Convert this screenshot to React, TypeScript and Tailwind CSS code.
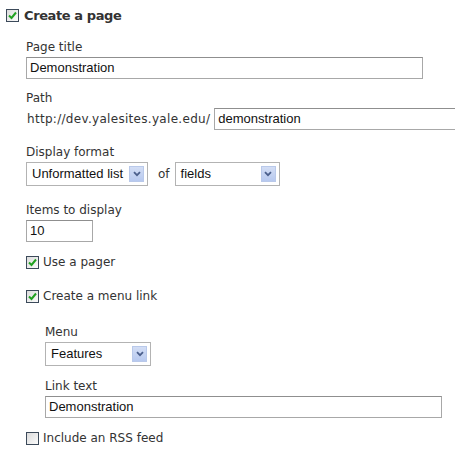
import React from 'react';

const labelFont = { fontFamily: '"DejaVu Sans", Verdana, sans-serif' };

function Checkbox({ checked }: { checked: boolean }) {
  return (
    <span className="inline-flex h-[13px] w-[13px] shrink-0 items-center justify-center border border-[#3c4a5a] bg-gradient-to-br from-[#dcdcdc] to-[#fbfbfb]">
      {checked && (
        <svg width="9" height="9" viewBox="0 0 9 9">
          <path d="M1 4.5 L3.5 7 L8 1.5" fill="none" stroke="#21a121" strokeWidth="2" />
        </svg>
      )}
    </span>
  );
}

function Arrow() {
  return (
    <span className="flex h-[16px] w-[15px] items-center justify-center border border-[#b9c9ea] bg-gradient-to-b from-[#d3def5] to-[#b7c9ef]">
      <svg width="8" height="6" viewBox="0 0 8 6">
        <path d="M1 1.2 L4 4.2 L7 1.2" fill="none" stroke="#4b5f8c" strokeWidth="1.8" />
      </svg>
    </span>
  );
}

function Select({ value, width }: { value: string; width: string }) {
  return (
    <div className={`flex h-[24px] items-center justify-between border border-[#b3b3b3] bg-white pl-[5px] pr-[3px] ${width}`}>
      <span className="text-[13px] text-[#111]">{value}</span>
      <Arrow />
    </div>
  );
}

function Label({ children }: { children: React.ReactNode }) {
  return (
    <div style={labelFont} className="text-[12px] leading-[15px] text-[#333] mb-[2px]">
      {children}
    </div>
  );
}

function TextInput({ value, width }: { value: string; width: string }) {
  return (
    <div className={`flex h-[22px] items-center border border-[#a8a8a8] border-t-[#8f8f8f] bg-white px-[3px] text-[13px] text-[#111] ${width}`}>
      {value}
    </div>
  );
}

function CheckRow({ checked, text }: { checked: boolean; text: string }) {
  return (
    <div className="flex items-center gap-[4px]">
      <Checkbox checked={checked} />
      <span style={labelFont} className="text-[12px] leading-[15px] text-[#333]">{text}</span>
    </div>
  );
}

export default function App() {
  return (
    <div className="h-[451px] w-[455px] overflow-hidden bg-white" style={{ fontFamily: '"Liberation Sans", Arial, sans-serif' }}>
      <div className="flex items-center gap-[5px] pl-[6px] pt-[8px]">
        <Checkbox checked />
        <span style={labelFont} className="text-[13px] font-bold leading-[15px] tracking-[-0.4px] text-[#333]">
          Create a page
        </span>
      </div>

      <div className="pl-[26px]">
        <div className="mt-[17px]">
          <Label>Page title</Label>
          <TextInput value="Demonstration" width="w-[397px]" />
        </div>

        <div className="mt-[12px]">
          <Label>Path</Label>
          <div className="flex items-center">
            <span style={labelFont} className="pl-[1px] text-[12px] tracking-[0.3px] text-[#333]">
              http://dev.yalesites.yale.edu/
            </span>
            <div className="ml-[4px]">
              <TextInput value="demonstration" width="w-[260px]" />
            </div>
          </div>
        </div>

        <div className="mt-[15px]">
          <Label>Display format</Label>
          <div className="flex items-center">
            <Select value="Unformatted list" width="w-[122px]" />
            <span style={labelFont} className="ml-[10px] mr-[5px] text-[12px] text-[#333]">of</span>
            <Select value="fields" width="w-[105px]" />
          </div>
        </div>

        <div className="mt-[17px]">
          <Label>Items to display</Label>
          <TextInput value="10" width="w-[67px]" />
        </div>

        <div className="mt-[13px]">
          <CheckRow checked text="Use a pager" />
        </div>

        <div className="mt-[19px]">
          <CheckRow checked text="Create a menu link" />
        </div>

        <div className="pl-[19px]">
          <div className="mt-[21px]">
            <Label>Menu</Label>
            <Select value="Features" width="w-[106px]" />
          </div>
          <div className="mt-[13px]">
            <Label>Link text</Label>
            <TextInput value="Demonstration" width="w-[397px]" />
          </div>
        </div>

        <div className="mt-[13px]">
          <CheckRow checked={false} text="Include an RSS feed" />
        </div>
      </div>
    </div>
  );
}
